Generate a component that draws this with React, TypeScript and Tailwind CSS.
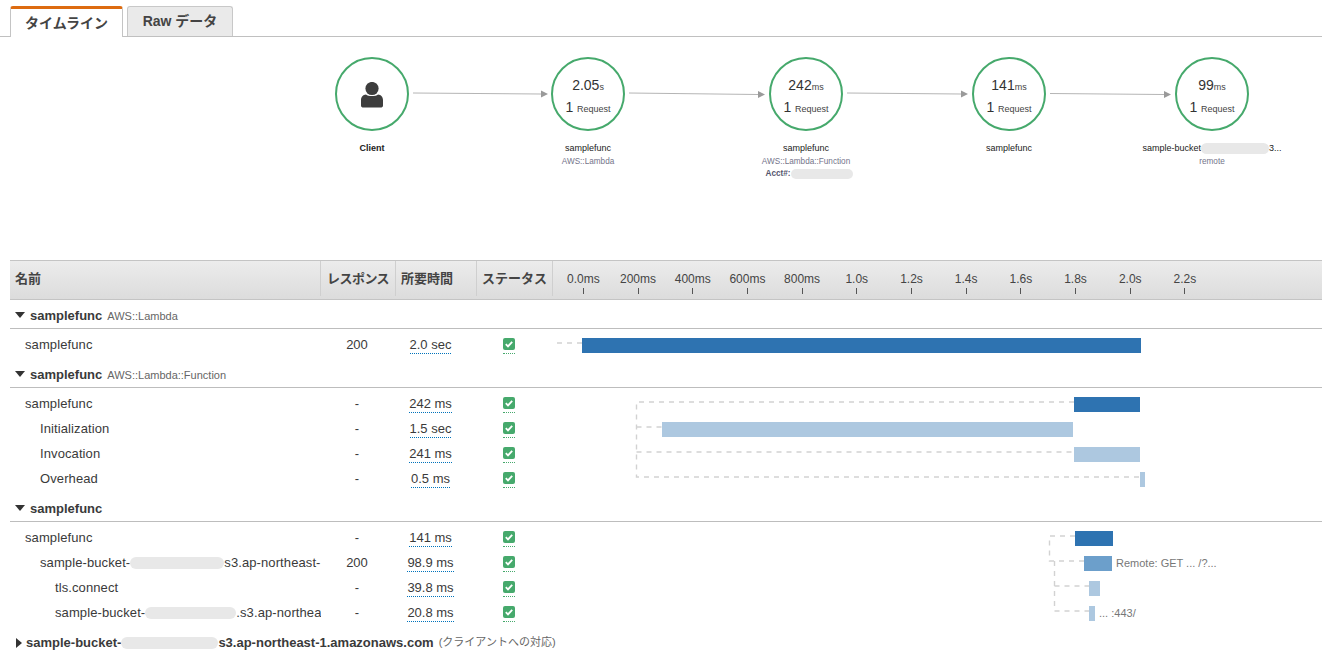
import React from "react";

const nodes = [
  { pos: "left-[298px]", big: "", unit: "", label: "Client", bold: true },
  { pos: "left-[514px]", big: "2.05", unit: "s", label: "samplefunc", sub: "AWS::Lambda" },
  { pos: "left-[732px]", big: "242", unit: "ms", label: "samplefunc", sub: "AWS::Lambda::Function", acct: true },
  { pos: "left-[935px]", big: "141", unit: "ms", label: "samplefunc" },
  { pos: "left-[1138px]", big: "99", unit: "ms", label: "bucket", sub: "remote" },
];

const ticks = ["0.0ms", "200ms", "400ms", "600ms", "800ms", "1.0s", "1.2s", "1.4s", "1.6s", "1.8s", "2.0s", "2.2s"];

function Blob({ className }: { className: string }) {
  return <span className={"inline-block rounded-full bg-[#e8e8e8] align-middle " + className} />;
}

function Node({ n }: { n: (typeof nodes)[number] }) {
  return (
    <div className={"absolute top-[20px] w-[148px] flex flex-col items-center " + n.pos}>
      <div className="w-[74px] h-[74px] rounded-full border-2 border-[#46a96c] bg-white flex flex-col items-center justify-center text-[#333]">
        {n.big ? (
          <div className="mt-[3px]">
            <div className="h-[22px] leading-[22px] text-center text-[14px]">
              {n.big}
              <span className="text-[9px] text-[#444]">{n.unit}</span>
            </div>
            <div className="h-[22px] leading-[22px] text-center text-[14px]">
              1 <span className="text-[9px] text-[#444]">Request</span>
            </div>
          </div>
        ) : (
          <svg width="22" height="26" viewBox="0 0 22 26" className="mt-[2px]">
            <circle cx="11" cy="6.5" r="6.6" fill="#3d3d3d" />
            <path d="M5 12.4 C7 14.4 15 14.4 17 12.4 C20 12.6 22 15 22 18 L22 23.5 C22 25 21 25.5 19.5 25.5 L2.5 25.5 C1 25.5 0 25 0 23.5 L0 18 C0 15 2 12.6 5 12.4 Z" fill="#3d3d3d" />
          </svg>
        )}
      </div>
      <div className={"mt-[10px] h-[14px] leading-[14px] text-[9px] whitespace-nowrap text-[#222] " + (n.bold ? "font-bold" : "")}>
        {n.label === "bucket" ? (
          <>
            sample-bucket
            <Blob className="w-[68px] h-[11px]" />
            3...
          </>
        ) : (
          n.label
        )}
      </div>
      {n.sub && <div className="h-[14px] leading-[14px] text-[8.2px] text-[#74748a] whitespace-nowrap">{n.sub}</div>}
      {n.acct && (
        <div className="h-[10px] ml-[6px] leading-[10px] text-[8.2px] font-bold text-[#55556e] whitespace-nowrap">
          Acct#:
          <Blob className="w-[62px] h-[10px]" />
        </div>
      )}
    </div>
  );
}

function Arrows() {
  const list = [
    [413, 93, 541, 94],
    [629, 93, 758, 94.5],
    [847, 93, 961, 94],
    [1050, 93.5, 1164, 94.5],
  ];
  return (
    <svg className="absolute inset-0" width="1322" height="223" viewBox="0 37 1322 223" fill="none">
      {list.map(([x1, y1, x2, y2]) => (
        <g key={x1}>
          <line x1={x1} y1={y1} x2={x2} y2={y2} stroke="#b5b5b5" strokeWidth="1.2" />
          <path d={`M${x2} ${y2 - 3.5} L${x2 + 7} ${y2} L${x2} ${y2 + 3.5} Z`} fill="#9a9a9a" />
        </g>
      ))}
    </svg>
  );
}

function Check() {
  return (
    <span className="inline-flex h-[16px] mt-[2px] border-b border-dotted border-[#46a96c]">
      <svg width="12" height="12" viewBox="0 0 12 12">
        <rect width="12" height="12" rx="2" fill="#46a96c" />
        <path d="M2.8 6.2 L5 8.4 L9.2 3.8" stroke="#fff" strokeWidth="1.8" fill="none" />
      </svg>
    </span>
  );
}

function Row({ name, indent, resp, dur, bar, after }: { name: React.ReactNode; indent: string; resp: string; dur: string; bar: string; after?: string }) {
  return (
    <div className="grid grid-cols-[311px_75px_81px_76px_1fr] h-[25px] items-center text-[13px] text-[#3a3a3a]">
      <div className={"overflow-hidden whitespace-nowrap tracking-[0.1px] " + indent}>{name}</div>
      <div className="text-center pr-[3px]">{resp}</div>
      <div className="text-center pr-[12px]">
        <span className="border-b border-dotted border-[#0073bb] pb-[1px]">{dur}</span>
      </div>
      <div className="text-center pr-[12px] leading-[0]">
        <Check />
      </div>
      <div className="flex items-center h-[15px] mt-[2px]">
        <div className={"h-[15px] shrink-0 " + bar} />
        {after && <span className="text-[11px] text-[#777] whitespace-nowrap">{after}</span>}
      </div>
    </div>
  );
}

function Group({ name, sub, height, children }: { name: string; sub?: string; height: string; children: React.ReactNode }) {
  return (
    <>
      <div className={"flex items-end border-b border-[#bdbdbd] pl-[5px] pb-[5px] " + height}>
        <svg width="10" height="6" viewBox="0 0 10 6" className="mr-[5px] mb-[5px]">
          <path d="M0 0 H10 L5 6 Z" fill="#333" />
        </svg>
        <span className="font-bold text-[13px] leading-[15px] text-[#3a3a3a]">{name}</span>
        {sub && <span className="ml-[5px] text-[11px] leading-[14px] text-[#666]">{sub}</span>}
      </div>
      <div className="pt-[3px]">{children}</div>
    </>
  );
}

function Connectors() {
  const paths = [
    "M557 343 H582",
    "M1074 402 H636.5 V477 H1140",
    "M636.5 427 H662",
    "M636.5 452 H1074",
    "M1075 536 H1049.5 V561 H1084",
    "M1054.5 561 V611 H1089",
    "M1054.5 586 H1089",
  ];
  return (
    <svg className="absolute left-0 top-0" width="1312" height="352" viewBox="10 300 1312 352" fill="none">
      {paths.map((d) => (
        <path key={d} d={d} stroke="#d2d2d2" strokeWidth="1.4" strokeDasharray="5 5" />
      ))}
    </svg>
  );
}

export default function App() {
  return (
    <div className="w-[1322px] h-[652px] overflow-hidden bg-white font-[family-name:Liberation_Sans,Noto_Sans_CJK_JP,sans-serif]">
      <div className="h-[37px] flex items-end pl-[10px] gap-[4px] border-b border-[#c0c0c0]">
        <div className="w-[113px] h-[31px] mb-[-1px] bg-white border-x border-[#c4c4c4] border-t-[3px] border-t-[#dd6b10] rounded-t-[3px] flex items-center justify-center font-bold text-[14px] text-[#444]">
          タイムライン
        </div>
        <div className="w-[106px] h-[30px] bg-[#eaeaea] border-x border-t border-[#c8c8c8] rounded-t-[3px] flex items-center justify-center font-bold text-[14px] text-[#444]">
          Raw データ
        </div>
      </div>

      <div className="relative h-[223px]">
        <Arrows />
        {nodes.map((n) => (
          <Node key={n.pos} n={n} />
        ))}
      </div>

      <div className="ml-[10px]">
        <div className="grid grid-cols-[311px_75px_81px_76px_1fr] h-[40px] border-y border-[#c4c4c4] bg-gradient-to-b from-[#ececec] to-[#dcdcdc] font-bold text-[13px] text-[#444]">
          <div className="h-[35px] flex items-center pl-[5px] border-r border-[#cfcfcf]">名前</div>
          <div className="h-[35px] flex items-center justify-center border-r border-[#cfcfcf] whitespace-nowrap tracking-[-0.5px]">レスポンス</div>
          <div className="h-[35px] flex items-center pl-[5px] border-r border-[#cfcfcf]">所要時間</div>
          <div className="h-[35px] flex items-center justify-center border-r border-[#cfcfcf] whitespace-nowrap">ステータス</div>
          <div className="flex pl-[3px] font-normal text-[12px] text-[#444]">
            {ticks.map((t) => (
              <div key={t} className="w-[54.7px] shrink-0 flex flex-col items-center pt-[11px]">
                <span className="h-[14px] leading-[14px]">{t}</span>
                <span className="mt-[2px] w-px h-[6px] bg-[#555]" />
              </div>
            ))}
          </div>
        </div>

        <div className="relative">
          <Connectors />
          <Group name="samplefunc" sub="AWS::Lambda" height="h-[29px]">
            <Row name="samplefunc" indent="pl-[15px]" resp="200" dur="2.0 sec" bar="ml-[29px] w-[559px] bg-[#2e73b1]" />
          </Group>
          <Group name="samplefunc" sub="AWS::Lambda::Function" height="h-[31px]">
            <Row name="samplefunc" indent="pl-[15px]" resp="-" dur="242 ms" bar="ml-[521px] w-[66px] bg-[#2e73b1]" />
            <Row name="Initialization" indent="pl-[30px]" resp="-" dur="1.5 sec" bar="ml-[109px] w-[411px] bg-[#adc8e0]" />
            <Row name="Invocation" indent="pl-[30px]" resp="-" dur="241 ms" bar="ml-[521px] w-[66px] bg-[#adc8e0]" />
            <Row name="Overhead" indent="pl-[30px]" resp="-" dur="0.5 ms" bar="ml-[587px] w-[5px] bg-[#adc8e0]" />
          </Group>
          <Group name="samplefunc" height="h-[31px]">
            <Row name="samplefunc" indent="pl-[15px]" resp="-" dur="141 ms" bar="ml-[522px] w-[38px] bg-[#2e73b1]" />
            <Row
              name={
                <>
                  sample-bucket-
                  <Blob className="w-[94px] h-[12px]" />
                  s3.ap-northeast-
                </>
              }
              indent="pl-[30px]"
              resp="200"
              dur="98.9 ms"
              bar="ml-[531px] w-[28px] mr-[4px] bg-[#6c9fcb]"
              after="Remote: GET ... /?..."
            />
            <Row name="tls.connect" indent="pl-[45px]" resp="-" dur="39.8 ms" bar="ml-[536px] w-[11px] bg-[#adc8e0]" />
            <Row
              name={
                <>
                  sample-bucket-
                  <Blob className="w-[91px] h-[12px]" />
                  .s3.ap-northea
                </>
              }
              indent="pl-[45px]"
              resp="-"
              dur="20.8 ms"
              bar="ml-[536px] w-[6px] mr-[4px] bg-[#adc8e0]"
              after="... :443/"
            />
          </Group>
          <div className="h-[30px] flex items-center pl-[6px] pt-[5px]">
            <svg width="6" height="10" viewBox="0 0 6 10" className="mr-[4px]">
              <path d="M0 0 V10 L6 5 Z" fill="#333" />
            </svg>
            <span className="font-bold text-[13px] text-[#3a3a3a] whitespace-nowrap">
              sample-bucket-
              <Blob className="w-[97px] h-[12px]" />
              s3.ap-northeast-1.amazonaws.com
            </span>
            <span className="ml-[5px] text-[11px] text-[#666]">(クライアントへの対応)</span>
          </div>
        </div>
      </div>
    </div>
  );
}
